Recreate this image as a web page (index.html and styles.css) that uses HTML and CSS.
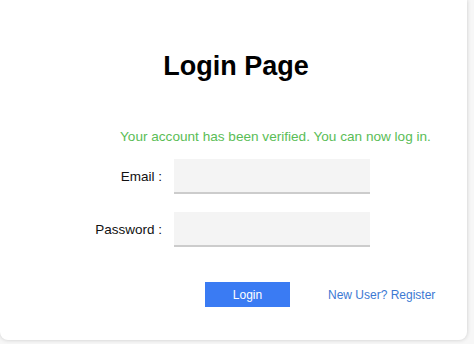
FILE: index.html
```html
<!DOCTYPE html>
<html lang="en">
<head>
    <meta charset="UTF-8">
    <meta name="viewport" content="width=device-width, initial-scale=1.0">
    <title>Login Page</title>
    <link rel="stylesheet" href="styles.css">
</head>
<body>
    <div class="card">
        <h1>Login Page</h1>
        <p class="message">Your account has been verified. You can now log in.</p>

        <form class="login-form" onsubmit="return false;">
            <label for="email">Email :</label>
            <input type="email" id="email">
            <label for="password">Password :</label>
            <input type="password" id="password">
        </form>

        <div class="actions">
            <button class="login-btn">Login</button>
            <a href="#" class="register-link">New User? Register</a>
        </div>
    </div>
</body>
</html>
```

FILE: styles.css
```css
:root {
    --green: #5abd56;
    --blue: #3a7bf3;
    --link: #3c79d3;
    --input-bg: #f4f4f4;
}

body {
    font-family: 'Liberation Sans', Arial, sans-serif;
    margin: 0;
    padding: 0 7px 4px 0;
    background-color: #f7f7f7;
}

.card {
    background-color: #ffffff;
    border-radius: 0 0 8px 8px;
    box-shadow: 0 0 4px rgba(0, 0, 0, 0.18);
    padding: 51px 0 33px;
}

h1 {
    margin: 0;
    padding-left: 5px;
    text-align: center;
    font-size: 27px;
    font-weight: bold;
    color: #000000;
    line-height: 31px;
}

.message {
    margin: 47px 0 0;
    padding-left: 120px;
    color: var(--green);
    font-size: 13.6px;
    line-height: 16px;
}

.login-form {
    display: grid;
    grid-template-columns: 162px 196px;
    column-gap: 12px;
    row-gap: 18px;
    align-items: center;
    margin-top: 14px;
}

.login-form label {
    text-align: right;
    font-size: 13.5px;
    color: #111111;
}

.login-form input {
    box-sizing: border-box;
    width: 196px;
    height: 35px;
    margin: 0;
    border: none;
    border-bottom: 2px solid #cccccc;
    background-color: var(--input-bg);
    outline: none;
    font-family: inherit;
}

.actions {
    display: flex;
    align-items: center;
    gap: 38px;
    margin: 35px 0 0 205px;
}

.login-btn {
    width: 85px;
    height: 25px;
    border: none;
    background-color: var(--blue);
    color: #ffffff;
    font-family: inherit;
    font-size: 12px;
    cursor: pointer;
}

.register-link {
    color: var(--link);
    font-size: 12px;
    text-decoration: none;
}
```
